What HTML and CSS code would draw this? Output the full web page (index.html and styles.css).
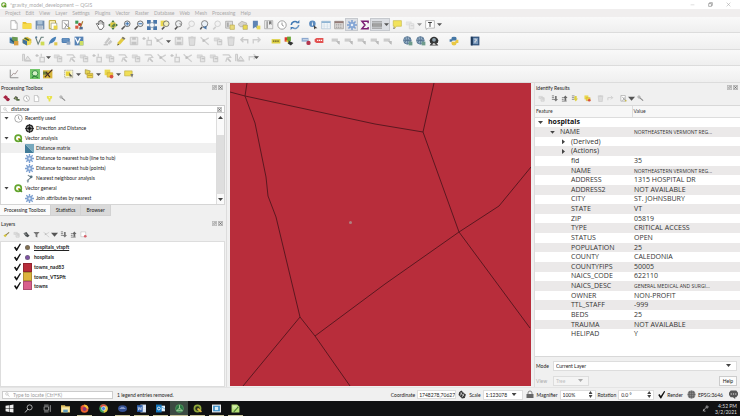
FILE: index.html
```html
<!DOCTYPE html>
<html lang="en">
<head>
<meta charset="utf-8">
<title>*gravity_model_development — QGIS</title>
<link rel="stylesheet" href="styles.css">
</head>
<body>
<svg class="defs" aria-hidden="true">
  <symbol id="q" viewBox="0 0 16 16"><circle cx="7.5" cy="7.5" r="5.5" fill="#fff" stroke="#63a52e" stroke-width="3"/><path d="M8 8l6 6" stroke="#4c8d24" stroke-width="3"/><path d="M7 7h4l-4 4z" fill="#d9a92b"/></symbol>
  <symbol id="page" viewBox="0 0 16 16"><path d="M3 1h7l3 4v10H3z" fill="#fff" stroke="#a9a9a9" stroke-width="1.3"/><path d="M10 1v4h3" fill="none" stroke="#a9a9a9"/></symbol>
  <symbol id="folder" viewBox="0 0 16 16"><path d="M1 3h5l2 2h7v9H1z" fill="#e8c12f"/><path d="M1 6h14v8H1z" fill="#f7db4b"/></symbol>
  <symbol id="save" viewBox="0 0 16 16"><path d="M1 1h14v14H1z" fill="#6e8bad"/><path d="M4 1h8v6H4z" fill="#a8c0d6"/><path d="M3 9h10v6H3z" fill="#d8dfe5"/><path d="M4 11h8M4 13h8" stroke="#7b8c9e"/></symbol>
  <symbol id="layout" viewBox="0 0 16 16"><path d="M2 1h10v13H2z" fill="#fff5c3" stroke="#b8a130" stroke-width="1.5"/><path d="M5 5h9v10H5z" fill="#fff" stroke="#8b8b6a"/><path d="M9 9h6v6H9z" fill="#ead545"/></symbol>
  <symbol id="layouts" viewBox="0 0 16 16"><path d="M2 1h10v13H2z" fill="#fff" stroke="#999" stroke-width="1.4"/><path d="M5 4l8 9M10 6l-4 7" stroke="#888" stroke-width="1.6"/><circle cx="13" cy="13" r="2" fill="#c5b74e"/></symbol>
  <symbol id="style" viewBox="0 0 16 16"><path d="M2 1h5v5H2z" fill="#3f9a56"/><path d="M2 9h5v5H2z" fill="#d8573c"/><path d="M9 15l5-13" stroke="#a9782e" stroke-width="2"/><circle cx="9" cy="7" r="2.5" fill="#c33d35"/><path d="M9 11h5v4H9z" fill="#4c6892"/></symbol>
  <symbol id="hand" viewBox="0 0 16 16"><path d="M4 9L2 6l2-1 2 3V2h2v-1h2v1h2v2h2v7l-3 4H7z" fill="#fff" stroke="#444" stroke-width="1.2"/><path d="M8 2v5M10 2v5M12 4v4" stroke="#777"/></symbol>
  <symbol id="pan" viewBox="0 0 16 16"><path d="M8 0l3 4H5zM8 16l3-4H5zM0 8l4-3v6zM16 8l-4-3v6z" fill="#44763d"/><path d="M4 4h8v8H4z" fill="#e2cc3c"/><path d="M5 10l5-5 2 3-3 4z" fill="#61864b"/></symbol>
  <symbol id="zin" viewBox="0 0 16 16"><path d="M1 15l5-5" stroke="#555" stroke-width="2.4"/><circle cx="10" cy="6" r="4.5" fill="#e2edf8" stroke="#555" stroke-width="1.3"/><path d="M7 6h6M10 3v6" stroke="#3e72ad" stroke-width="1.6"/></symbol>
  <symbol id="zout" viewBox="0 0 16 16"><path d="M1 15l5-5" stroke="#555" stroke-width="2.4"/><circle cx="10" cy="6" r="4.5" fill="#e8eff5" stroke="#555" stroke-width="1.3"/><path d="M7 6h6" stroke="#3e72ad" stroke-width="1.6"/></symbol>
  <symbol id="zfull" viewBox="0 0 16 16"><path d="M0 0h6v6H0zM10 0h6v6h-6zM0 10h6v6H0zM10 10h6v6h-6z" fill="#4a77ab"/><circle cx="8" cy="8" r="4" fill="#f6f9fc" stroke="#607a96"/></symbol>
  <symbol id="zsel" viewBox="0 0 16 16"><path d="M1 1h9v9H1z" fill="#ecd94d"/><path d="M3 15l4-4" stroke="#555" stroke-width="2.4"/><circle cx="10" cy="6" r="4.5" fill="#f1efc0" stroke="#666" stroke-width="1.3"/></symbol>
  <symbol id="zlay" viewBox="0 0 16 16"><path d="M3 15l4-4" stroke="#555" stroke-width="2.4"/><circle cx="9" cy="6" r="5" fill="#eef0f1" stroke="#777" stroke-width="1.4"/><path d="M9 5h4v4z" fill="#aaa"/></symbol>
  <symbol id="zoff" viewBox="0 0 16 16"><path d="M2 15l4-4" stroke="#ccc" stroke-width="2.4"/><circle cx="9" cy="6" r="4.5" fill="#f2f2f2" stroke="#ccc" stroke-width="1.4"/></symbol>
  <symbol id="zlast" viewBox="0 0 16 16"><path d="M2 15l3-4" stroke="#555" stroke-width="2.4"/><circle cx="9" cy="6" r="5" fill="#eaf1f8" stroke="#777" stroke-width="1.4"/><path d="M12 9v6l-6-3z" fill="#4c77a8"/></symbol>
  <symbol id="newmap" viewBox="0 0 16 16"><path d="M1 2h11v11H1z" fill="#ddd" stroke="#999"/><path d="M3 4h3v7H3z" fill="#aaa"/><path d="M8 8h7v7H8z" fill="#e9da7d" stroke="#b9a94a"/></symbol>
  <symbol id="new3d" viewBox="0 0 16 16"><path d="M0 7l6-5 8 3-2 5-8 1z" fill="#d6d3ce" stroke="#a5a19b"/><path d="M8 8h7v7H8z" fill="#ead84e" stroke="#aaa06a"/></symbol>
  <symbol id="bookm" viewBox="0 0 16 16"><path d="M3 1h8v13l-4-3-4 3z" fill="#5e84b4"/><path d="M9 9h6v6H9z" fill="#e7d656"/></symbol>
  <symbol id="books" viewBox="0 0 16 16"><path d="M1 1h13v13H1z" fill="#eee" stroke="#999"/><path d="M4 2h2v11H4z" fill="#888"/><path d="M8 2h4v6L10 6 8 8z" fill="#777"/></symbol>
  <symbol id="clock" viewBox="0 0 16 16"><circle cx="8" cy="8" r="6.7" fill="#fff" stroke="#8d8d8d" stroke-width="1.3"/><path d="M8 4v4l3 2" fill="none" stroke="#777" stroke-width="1.2"/></symbol>
  <symbol id="refresh" viewBox="0 0 16 16"><path d="M2 8a6 6 0 0 1 10-4" fill="none" stroke="#4179b4" stroke-width="2.5"/><path d="M14 8a6 6 0 0 1-10 4" fill="none" stroke="#6b97c5" stroke-width="2.5"/><path d="M10 5h5V0zM6 11H1v5z" fill="#4179b4"/></symbol>
  <symbol id="ident" viewBox="0 0 16 16"><circle cx="7" cy="6" r="5.2" fill="#5b8bbf"/><path d="M7 5v4M7 3v1" stroke="#fff" stroke-width="1.6"/><path d="M9 8l6 5-3 0-2 2z" fill="#444"/></symbol>
  <symbol id="table" viewBox="0 0 16 16"><path d="M1 2h14v12H1z" fill="#fff" stroke="#9fb9cf"/><path d="M1 2h14v3H1z" fill="#8fb4d3"/><path d="M5 5v9M10 5v9M1 8h14M1 11h14" stroke="#c5d6e2"/></symbol>
  <symbol id="calc" viewBox="0 0 16 16"><path d="M1 2h14v12H1z" fill="#dfdcda" stroke="#8f8b89"/><path d="M1 2h14v3H1z" fill="#957b77"/><path d="M3 7h10M3 9.5h10M3 12h10" stroke="#8b8b8b" stroke-dasharray="2 1"/></symbol>
  <symbol id="gear" viewBox="0 0 16 16"><path d="M8 0v16M0 8h16M2.3 2.3l11.4 11.4M13.7 2.3L2.3 13.7" stroke="#7c9fd0" stroke-width="2.4"/><circle cx="8" cy="8" r="5" fill="#86a7d5"/><circle cx="8" cy="8" r="2" fill="#e7eef8"/></symbol>
  <symbol id="sum" viewBox="0 0 16 16"><path d="M13 5V2H3l5 6-5 6h10v-3" fill="none" stroke="#7b1d73" stroke-width="2.3"/></symbol>
  <symbol id="ruler" viewBox="0 0 16 16"><path d="M0 3h16M0 13h16" stroke="#888" stroke-width="1.5"/><path d="M0 6h16v4H0z" fill="#aaa" stroke="#777"/></symbol>
  <symbol id="tip" viewBox="0 0 16 16"><path d="M2 1h13v9H7l-3 4v-4H2z" fill="#f2e35c" stroke="#c3b544"/><circle cx="3" cy="13" r="1.5" fill="#999"/></symbol>
  <symbol id="textann" viewBox="0 0 16 16"><path d="M1 1h14v12H5l-3 2V13H1z" fill="#fff" stroke="#999"/><path d="M5 4h6M8 4v7" stroke="#333" stroke-width="1.5"/></symbol>
  <symbol id="car" viewBox="0 0 8 8"><path d="M0 2h8L4 6.5z" fill="#555"/></symbol>
  <symbol id="layers" viewBox="0 0 16 16"><path d="M1 2l8 1v10l-8-2z" fill="#4e83ad"/><path d="M5 1l9 1v9l-9-1z" fill="#6b9a52"/><path d="M8 8h7v7H8z" fill="#d89f3f"/><path d="M2 5l6 5" stroke="#245177" stroke-width="2"/></symbol>
  <symbol id="gpkg" viewBox="0 0 16 16"><path d="M1 5l7-4 7 4v6l-7 4-7-4z" fill="#d9ba3c"/><path d="M1 5l7 3v7l-7-4z" fill="#41719d"/><path d="M8 8h6v6H8z" fill="#f0dc55"/><path d="M4 3l7 4" stroke="#3f6336" stroke-width="2.5"/></symbol>
  <symbol id="vee" viewBox="0 0 16 16"><path d="M1 2l4 11 5-11h4" fill="none" stroke="#667d79" stroke-width="1.7"/><circle cx="2" cy="2" r="1.7" fill="#5b7d99"/><path d="M9 9h6v6H9z" fill="#cedb55"/></symbol>
  <symbol id="feather" viewBox="0 0 16 16"><path d="M1 15c1-8 5-13 12-14 0 5-4 10-10 11z" fill="#4b82b8"/><path d="M10 10h5v5h-5z" fill="#e2c84c"/></symbol>
  <symbol id="chip" viewBox="0 0 16 16"><rect x="1" y="3" width="13" height="8" rx="2" fill="#4f7fb4"/><path d="M3 5h9M3 8h9" stroke="#92b3d5"/><path d="M9 9h6v5H9z" fill="#8ea4bf"/></symbol>
  <symbol id="virt" viewBox="0 0 16 16"><path d="M1 1h14v14H1z" fill="#5682b5"/><path d="M2 3l4 8 4-8" fill="none" stroke="#fff" stroke-width="2"/><path d="M9 8h6v7H9z" fill="#cddf66"/></symbol>
  <symbol id="pens" viewBox="0 0 16 16"><path d="M2 11l7-9 3 2-7 9zM7 12l5-6 3 3-5 5z" fill="#c8c8c8"/><path d="M1 14h7" stroke="#bbb" stroke-width="2"/></symbol>
  <symbol id="pencil" viewBox="0 0 16 16"><path d="M2 15l1-5 8-9 4 3-8 9z" fill="#e3cb42"/><path d="M11 1l4 3-2 2-4-3z" fill="#777"/><path d="M2 15l1-3 2 2z" fill="#444"/></symbol>
  <symbol id="d1" viewBox="0 0 16 16"><path d="M2 2h12v12H2z" fill="#e8e8e8" stroke="#c8c8c8" stroke-width="1.5"/><path d="M5 2h6v4H5zM4 9h8v5H4z" fill="#c5c5c5"/></symbol>
  <symbol id="d2" viewBox="0 0 16 16"><path d="M1 4h5M8 7h7v7H8z" fill="#eee" stroke="#cdcdcd" stroke-width="2"/><circle cx="3" cy="4" r="2" fill="#c4c4c4"/><path d="M10 1v5" stroke="#ccc" stroke-width="2"/></symbol>
  <symbol id="d3" viewBox="0 0 16 16"><path d="M1 2l5 5 8 7M14 3L4 9" fill="none" stroke="#cfcfcf" stroke-width="2"/><circle cx="6" cy="7" r="2" fill="#bdbdbd"/></symbol>
  <symbol id="d4" viewBox="0 0 16 16"><path d="M3 3h10l-1 12H4zM2 2h12M6 0h4" fill="#ddd" stroke="#cacaca" stroke-width="1.5"/></symbol>
  <symbol id="d5" viewBox="0 0 16 16"><path d="M2 3h8v5H2z" fill="#ddd" stroke="#cdcdcd"/><path d="M7 6h7v8H7z" fill="#e6e6e6" stroke="#c8c8c8" stroke-width="1.5"/><path d="M9 9h5" stroke="#c4c4c4" stroke-width="2"/></symbol>
  <symbol id="d6" viewBox="0 0 16 16"><path d="M14 12V6H3M7 2L3 6l4 4" fill="none" stroke="#cacaca" stroke-width="2.2"/></symbol>
  <symbol id="d7" viewBox="0 0 16 16"><path d="M2 12V6h11M9 2l4 4-4 4" fill="none" stroke="#cfcfcf" stroke-width="2.2"/></symbol>
  <symbol id="d8" viewBox="0 0 16 16"><path d="M1 13V2h3v11h11M5 12l4-7 5 7z" fill="#e4e4e4" stroke="#c8c8c8" stroke-width="1.6"/></symbol>
  <symbol id="d9" viewBox="0 0 16 16"><path d="M1 3h10l3 4-6 1-2 6" fill="none" stroke="#cdcdcd" stroke-width="2"/><path d="M9 9l5 5" stroke="#c4c4c4" stroke-width="2.5"/></symbol>
  <symbol id="tag" viewBox="0 0 16 16"><path d="M1 5h14v7H1z" fill="#ddd044"/><path d="M3 8h10" stroke="#655f25" stroke-width="2" stroke-dasharray="2.5 1"/></symbol>
  <symbol id="pie" viewBox="0 0 16 16"><path d="M1 2h6v7H1z" fill="#df3a2b"/><path d="M5 1h6v7H5z" fill="#68a433"/><path d="M7 7l8 4-4 4-5-3z" fill="#333"/><path d="M2 7h5v4z" fill="#e2cf34"/></symbol>
  <symbol id="pin" viewBox="0 0 16 16"><path d="M1 3h11v6H1z" fill="#8ca8cf"/><path d="M3 6h8" stroke="#fff"/><circle cx="12" cy="11" r="3.5" fill="#b2364e"/></symbol>
  <symbol id="rtag" viewBox="0 0 16 16"><path d="M1 5l3-2h11v8H4L1 9z" fill="#e25251"/><path d="M5 7h8" stroke="#fff" stroke-width="2" stroke-dasharray="2 1"/></symbol>
  <symbol id="dtag" viewBox="0 0 16 16"><path d="M1 4h10v5H1z" fill="#ccc"/><path d="M8 8h6v6l-3-2z" fill="#bbb"/></symbol>
  <symbol id="globe" viewBox="0 0 16 16"><circle cx="7" cy="7" r="6" fill="#9ab4cb" stroke="#547390" stroke-width="1.3"/><path d="M1 7h12M7 1v12M3 3q4 3 0 8M11 3q-4 3 0 8" fill="none" stroke="#41617f"/><path d="M9 9h6v6H9z" fill="#6f9b8b"/></symbol>
  <symbol id="osm" viewBox="0 0 16 16"><path d="M1 7q2-6 7-6t7 6l-1 4H2z" fill="#333"/><circle cx="8" cy="6" r="3" fill="#8fa2ad"/><path d="M1 15l3-5 3 2 2-2 3 1 3 4z" fill="#444"/><path d="M5 14l3-3 3 3z" fill="#eee"/></symbol>
  <symbol id="py" viewBox="0 0 16 16"><path d="M4 9V3q0-2 4-2t4 2v4H6q-2 0-2 2H1V5h7" fill="#4678a6"/><path d="M12 6v6q0 3-4 3t-4-3V9h6q2 0 2-3h3v5H8" fill="#e9c844"/></symbol>
  <symbol id="help" viewBox="0 0 16 16"><path d="M1 1h14v14H1z" fill="#33557e"/><path d="M5 3h8v10H5z" fill="#7998bb"/><path d="M3 1v14" stroke="#182f4c" stroke-width="2"/><path d="M7 5h3v3H8v3" fill="none" stroke="#eee" stroke-width="1.3"/></symbol>
  <symbol id="plot" viewBox="0 0 16 16"><path d="M2 1v13h13" fill="none" stroke="#777" stroke-width="1.3"/><path d="M3 12l4-5 3 1 4-6" fill="none" stroke="#988" stroke-width="1.3"/></symbol>
  <symbol id="ors" viewBox="0 0 16 16"><path d="M0 0h16v16H0z" fill="#72c669"/><circle cx="8" cy="7" r="4.5" fill="#d4efc6" stroke="#338a43" stroke-width="1.5"/><path d="M3 14l4-3 6 3" stroke="#31843b" stroke-width="2" fill="none"/></symbol>
  <symbol id="broom" viewBox="0 0 16 16"><path d="M0 2h15v13H0z" fill="#d8b63d"/><path d="M0 4h7v5H0z" fill="#6b7f38"/><path d="M3 13L15 1M5 5l6 8" stroke="#4b2f22" stroke-width="2"/></symbol>
  <symbol id="sel" viewBox="0 0 16 16"><path d="M1 2h13v12H1z" fill="#fbf7ca" stroke="#888" stroke-dasharray="2 1"/><path d="M3 4h7v7H3z" fill="#e9d53c"/><path d="M8 6l6 6H9z" fill="#555"/></symbol>
  <symbol id="selv" viewBox="0 0 16 16"><path d="M2 1l8 2-2 6-6-1z" fill="#e5d454" stroke="#9b8c31"/><path d="M5 7h9v7H5z" fill="#f3db4a" stroke="#a98d2c"/><path d="M6 10h7" stroke="#886d29"/></symbol>
  <symbol id="desel" viewBox="0 0 16 16"><path d="M1 1h9v9H1z" fill="#ead84d"/><path d="M5 6h9v7H5z" fill="#eecf40" stroke="#c5a831"/><circle cx="12" cy="12" r="3" fill="#d95042"/></symbol>
  <symbol id="selloc" viewBox="0 0 16 16"><path d="M1 3h12v8H1z" fill="#f0df57" stroke="#bcad42"/><path d="M10 8h5l-2 6z" fill="#777"/></symbol>
  <symbol id="gears" viewBox="0 0 16 16"><circle cx="6" cy="5" r="4" fill="#ba2e4b"/><circle cx="11" cy="10" r="4" fill="#9e2140"/><path d="M1 5h10M6 1v9M7 10h8" stroke="#9e2140" stroke-width="2"/></symbol>
  <symbol id="model" viewBox="0 0 16 16"><path d="M1 8l5-6 5 3v5H4z" fill="#555c50"/><path d="M6 9h9v4H8z" fill="#516844"/><path d="M4 6l4 3" stroke="#bad46a" stroke-width="2"/></symbol>
  <symbol id="wrench" viewBox="0 0 16 16"><path d="M6 6l8 7" stroke="#888" stroke-width="2.5"/><circle cx="4.5" cy="4.5" r="2.5" fill="none" stroke="#999" stroke-width="2"/></symbol>
  <symbol id="bulb" viewBox="0 0 16 16"><path d="M2 2h12v5l-4 4v4H6v-4L2 7z" fill="#e8e24e"/><path d="M5 4h4v4z" fill="#fffbb5"/></symbol>
  <symbol id="mag" viewBox="0 0 16 16"><circle cx="6" cy="6" r="4" fill="none" stroke="#999" stroke-width="1.4"/><path d="M9 9l5 6" stroke="#999" stroke-width="1.6"/></symbol>
  <symbol id="compass" viewBox="0 0 16 16"><circle cx="8" cy="8" r="6" fill="#888" stroke="#222" stroke-width="2"/><path d="M8 0v16M0 8h16" stroke="#222" stroke-width="1.5"/><circle cx="8" cy="8" r="2.5" fill="#111"/></symbol>
  <symbol id="matrix" viewBox="0 0 16 16"><path d="M0 0h16v16H0z" fill="#77a9bd"/><path d="M0 0l16 16H0z" fill="#427c99"/><path d="M0 0l16 16" stroke="#a7c8d5"/></symbol>
  <symbol id="near" viewBox="0 0 16 16"><path d="M5 2l6 4-6 5v4" fill="none" stroke="#73838b" stroke-width="2"/><circle cx="11" cy="5" r="2.5" fill="#54717f"/><circle cx="5" cy="12" r="2" fill="#8ca0aa"/></symbol>
  <symbol id="brush" viewBox="0 0 16 16"><path d="M1 10l5-3 3 3-4 4z" fill="#d5c43e"/><path d="M7 9l7-6" stroke="#8c8050" stroke-width="2.5"/></symbol>
  <symbol id="eye" viewBox="0 0 16 16"><path d="M1 5l7-3 4 6 3 2-4 4-5-2z" fill="#4c5052"/><path d="M3 6l5 2" stroke="#c2c8c2" stroke-width="1.5"/></symbol>
  <symbol id="filter" viewBox="0 0 16 16"><path d="M1 2h14l-5 6v7l-4-2V8z" fill="#777"/></symbol>
  <symbol id="expand" viewBox="0 0 16 16"><path d="M2 2h5M2 6h5M2 10h5" stroke="#666" stroke-width="1.7"/><path d="M9 2h4v7h3l-5 6-5-6h3z" fill="#777"/></symbol>
  <symbol id="collapse" viewBox="0 0 16 16"><path d="M2 6h4M2 10h4M2 14h11" stroke="#666" stroke-width="1.7"/><path d="M8 13h4V7h3l-5-6-5 6h3z" fill="#666"/></symbol>
  <symbol id="expnew" viewBox="0 0 16 16"><path d="M2 2h6M2 6h6M2 10h6" stroke="#777" stroke-width="1.7"/><path d="M8 2h5v6h3l-5 7-5-7h2z" fill="#ddcf42"/></symbol>
  <symbol id="remove" viewBox="0 0 16 16"><path d="M2 2h11v11H2z" fill="#fff" stroke="#aaa"/><circle cx="12" cy="12" r="3" fill="#d7606a"/></symbol>
  <symbol id="dock" viewBox="0 0 16 16"><path d="M1 1h14v14H1zM5 6h5v5H5zM7 4h5v5" fill="none" stroke="#808080" stroke-width="1.6"/></symbol>
  <symbol id="close" viewBox="0 0 16 16"><path d="M1 1h14v14H1z" fill="#ddd" stroke="#808080" stroke-width="1.5"/><path d="M4 4l8 8M12 4l-8 8" stroke="#555" stroke-width="2"/></symbol>
  <symbol id="extent" viewBox="0 0 16 16"><path d="M2 4l4-3 4 4 4 3-2 6-5 1-6-6z" fill="#333"/><path d="M4 5l7 6M7 4l-3 6M11 6l-4 7" stroke="#ddd" stroke-width="1.3"/></symbol>
  <symbol id="lock" viewBox="0 0 16 16"><path d="M4 8V5q0-4 4-4t4 4v3" fill="none" stroke="#888" stroke-width="2"/><path d="M1 7h14v8H1z" fill="#666"/></symbol>
  <symbol id="crs" viewBox="0 0 16 16"><circle cx="8" cy="8" r="7" fill="#888"/><path d="M1 8h14M8 1v14M3 4h10M3 12h10M5 2q-3 6 0 12M11 2q3 6 0 12" fill="none" stroke="#555"/></symbol>
  <symbol id="msg" viewBox="0 0 16 16"><path d="M3 1h10l3 4v4l-3 4h-2v3l-4-3H3L0 9V5z" fill="#555"/><path d="M3 7h10" stroke="#eee" stroke-width="2" stroke-dasharray="2 2"/></symbol>
  <symbol id="win" viewBox="0 0 16 16"><path d="M1 3l6-1v5.500H1zM8 2l7-1v6.500H8zM1 8.500h6V14l-6-1zM8 8.500h7V15l-7-1z" fill="#eee"/></symbol>
  <symbol id="wmag" viewBox="0 0 16 16"><circle cx="10" cy="6" r="4.5" fill="none" stroke="#ddd" stroke-width="1.3"/><path d="M7 9l-5 6" stroke="#ddd" stroke-width="1.5"/></symbol>
  <symbol id="task" viewBox="0 0 16 16"><path d="M2 5h8v6H2zM2 2h8M2 14h8M13 2v12" fill="none" stroke="#bbb" stroke-width="1.3"/></symbol>
  <symbol id="files" viewBox="0 0 16 16"><path d="M0 2h7l1 2h8v11H0z" fill="#e4c365"/><path d="M1 6h14v8H1z" fill="#f8e9aa"/><path d="M4 10h8v5H4z" fill="#5e9cbd"/></symbol>
  <symbol id="ff" viewBox="0 0 16 16"><circle cx="8" cy="8.500" r="7" fill="#ec6430"/><path d="M7 1q8 1 8 8L9 6z" fill="#f5c538"/><circle cx="8" cy="9" r="3.500" fill="#8b3979"/><path d="M1 4l5 3-3 4z" fill="#e43c3d"/></symbol>
  <symbol id="chrome" viewBox="0 0 16 16"><circle cx="8" cy="8" r="7.500" fill="#3da35a"/><path d="M1.500 4a7.500 7.500 0 0 1 13 0L8 8z" fill="#df4a3f"/><path d="M14.500 4a7.500 7.500 0 0 1-6 11.500L8 8V4z" fill="#eac53f"/><circle cx="8" cy="8" r="3.500" fill="#4a83db" stroke="#fff"/></symbol>
  <symbol id="oval" viewBox="0 0 16 16"><ellipse cx="8" cy="8" rx="8" ry="6" fill="#334f91"/><path d="M3 8h10M5 6h6" stroke="#a7b7df" stroke-width="1.3"/></symbol>
  <symbol id="word" viewBox="0 0 16 16"><path d="M6 1h10v14H6z" fill="#d4e0f1"/><path d="M0 2h10v12H0z" fill="#2b5da9"/><path d="M2 5l1 6 2-5 2 5 1-6M11 5h4M11 8h4M11 11h4" fill="none" stroke="#fff"/></symbol>
  <symbol id="outlook" viewBox="0 0 16 16"><path d="M7 3h9v10H7z" fill="#e2eef7"/><path d="M0 1h10v14H0z" fill="#1677bd"/><circle cx="5" cy="8" r="2.5" fill="none" stroke="#fff" stroke-width="1.5"/><path d="M10 5l6 4" stroke="#1677bd"/></symbol>
  <symbol id="green" viewBox="0 0 16 16"><circle cx="8" cy="8" r="7" fill="#2a7543" stroke="#62ab6b"/><path d="M8 2v6M3 12l5-5 5 5z" stroke="#b0d7a6" stroke-width="1.5" fill="#478f50"/></symbol>
  <symbol id="qt" viewBox="0 0 16 16"><circle cx="8" cy="8" r="5.5" fill="#26301a" stroke="#8fa83b" stroke-width="3"/><path d="M8 8l7 6" stroke="#d9b63c" stroke-width="3"/></symbol>
  <symbol id="photo" viewBox="0 0 16 16"><path d="M0 1h16v14H0z" fill="#eee"/><path d="M2 3h12v10H2z" fill="#3c8fc8"/><path d="M5 5h6v6H5z" fill="#d9ecf5"/></symbol>
  <symbol id="npp" viewBox="0 0 16 16"><path d="M1 1h10l4 4v10H1z" fill="#b5df77"/><path d="M3 4h7M3 7h8" stroke="#fff"/><path d="M5 14l8-9" stroke="#4a7d34" stroke-width="2"/></symbol>
  <symbol id="usb" viewBox="0 0 16 16"><path d="M2 14l7-8M9 6l1-4 4 1-1 4zM4 9v5h4" fill="none" stroke="#ccc" stroke-width="1.5"/></symbol>
  <symbol id="min" viewBox="0 0 16 16"><path d="M2 9h12" stroke="#bbb" stroke-width="1.5"/></symbol>
  <symbol id="rest" viewBox="0 0 16 16"><path d="M2 5h9v9H2zM5 5V2h9v9h-3" fill="none" stroke="#888" stroke-width="2"/></symbol>
  <symbol id="x" viewBox="0 0 16 16"><path d="M2 2l12 12M14 2L2 14" stroke="#999" stroke-width="1.5"/></symbol>
</svg>

<header class="title"><svg class="i9"><use href="#q"/></svg><span class="name">*gravity_model_development — QGIS</span>
  <button aria-label="Minimize"><svg><use href="#min"/></svg></button><button aria-label="Restore"><svg><use href="#rest"/></svg></button><button aria-label="Close"><svg><use href="#x"/></svg></button>
</header>
<nav class="menu"><a href="#">Project</a><a href="#">Edit</a><a href="#">View</a><a href="#">Layer</a><a href="#">Settings</a><a href="#">Plugins</a><a href="#">Vector</a><a href="#">Raster</a><a href="#">Database</a><a href="#">Web</a><a href="#">Mesh</a><a href="#">Processing</a><a href="#">Help</a></nav>

<div class="bar short">
  <div class="g n6"><button aria-label="New"><svg><use href="#page"/></svg></button><button aria-label="Open"><svg><use href="#folder"/></svg></button><button aria-label="Save"><svg><use href="#save"/></svg></button><button aria-label="New layout"><svg><use href="#layout"/></svg></button><button aria-label="Layout manager"><svg><use href="#layouts"/></svg></button><button aria-label="Style manager"><svg><use href="#style"/></svg></button></div>
  <div class="g n16"><button aria-label="Pan"><svg><use href="#hand"/></svg></button><button aria-label="Pan to selection"><svg><use href="#pan"/></svg></button><button aria-label="Zoom in"><svg><use href="#zin"/></svg></button><button aria-label="Zoom out"><svg><use href="#zout"/></svg></button><button aria-label="Zoom full"><svg><use href="#zfull"/></svg></button><button aria-label="Zoom to selection"><svg><use href="#zsel"/></svg></button><button aria-label="Zoom to layer"><svg><use href="#zlay"/></svg></button><button aria-label="Native resolution"><svg><use href="#zoff"/></svg></button><button aria-label="Zoom last"><svg><use href="#zlast"/></svg></button><button aria-label="Zoom next"><svg><use href="#zoff"/></svg></button><button aria-label="New map view"><svg><use href="#newmap"/></svg></button><button aria-label="New 3D view"><svg><use href="#new3d"/></svg></button><button aria-label="New bookmark"><svg><use href="#bookm"/></svg></button><button aria-label="Show bookmarks"><svg><use href="#books"/></svg></button><button aria-label="Temporal controller"><svg><use href="#clock"/></svg></button><button aria-label="Refresh"><svg><use href="#refresh"/></svg></button></div>
  <div class="g n5"><button aria-label="Identify"><svg><use href="#ident"/></svg></button><button aria-label="Attribute table"><svg><use href="#table"/></svg></button><button aria-label="Field calculator"><svg><use href="#calc"/></svg></button><button class="on" aria-label="Toolbox"><svg><use href="#gear"/></svg></button><button aria-label="Statistics"><svg><use href="#sum"/></svg></button></div>
  <button class="drop on" aria-label="Measure"><svg><use href="#ruler"/></svg><svg class="car"><use href="#car"/></svg></button>
  <button aria-label="Map tips"><svg><use href="#tip"/></svg></button>
  <button class="drop off" aria-label="Actions"><svg><use href="#d5"/></svg><svg class="car"><use href="#car"/></svg></button>
  <button class="drop" aria-label="Text annotation"><svg><use href="#textann"/></svg><svg class="car"><use href="#car"/></svg></button>
</div>

<div class="bar">
  <div class="g n6"><button aria-label="Data source manager"><svg><use href="#layers"/></svg></button><button aria-label="New GeoPackage"><svg><use href="#gpkg"/></svg></button><button aria-label="New shapefile"><svg><use href="#vee"/></svg></button><button aria-label="New SpatiaLite"><svg><use href="#feather"/></svg></button><button aria-label="Scratch layer"><svg><use href="#chip"/></svg></button><button aria-label="Virtual layer"><svg><use href="#virt"/></svg></button></div>
  <div class="g n4 far"><button aria-label="Current edits"><svg><use href="#pens"/></svg></button><button aria-label="Toggle editing"><svg><use href="#pencil"/></svg></button><button aria-label="Save edits"><svg><use href="#d1"/></svg></button><button aria-label="Add feature"><svg><use href="#d2"/></svg></button></div>
  <button class="drop" aria-label="Vertex tool"><svg><use href="#d3"/></svg><svg class="car"><use href="#car"/></svg></button>
  <div class="g n7"><button aria-label="Modify attributes"><svg><use href="#d1"/></svg></button><button aria-label="Delete"><svg><use href="#d4"/></svg></button><button aria-label="Cut"><svg><use href="#d3"/></svg></button><button aria-label="Copy"><svg><use href="#d5"/></svg></button><button aria-label="Paste"><svg><use href="#d4"/></svg></button><button aria-label="Undo"><svg><use href="#d6"/></svg></button><button aria-label="Redo"><svg><use href="#d7"/></svg></button></div>
  <div class="g n2 mid"><button aria-label="Labels"><svg><use href="#tag"/></svg></button><button aria-label="Diagrams"><svg><use href="#pie"/></svg></button></div>
  <div class="g n2 near"><button aria-label="Pinned labels"><svg><use href="#pin"/></svg></button><button aria-label="Unplaced labels"><svg><use href="#rtag"/></svg></button></div>
  <div class="g n5 near"><button aria-label="Pin label"><svg><use href="#dtag"/></svg></button><button aria-label="Show label"><svg><use href="#dtag"/></svg></button><button aria-label="Move label"><svg><use href="#dtag"/></svg></button><button aria-label="Rotate label"><svg><use href="#dtag"/></svg></button><button aria-label="Change label"><svg><use href="#dtag"/></svg></button></div>
  <div class="g n3 mid"><button aria-label="Search catalog"><svg><use href="#globe"/></svg></button><button aria-label="Geocode"><svg><use href="#globe"/></svg></button><button aria-label="Street map"><svg><use href="#osm"/></svg></button></div>
  <button class="mid" aria-label="Python console"><svg><use href="#py"/></svg></button>
  <button class="mid" aria-label="Help contents"><svg><use href="#help"/></svg></button>
</div>

<div class="bar short">
  <div class="g n2 indent"><button aria-label="Advanced digitizing"><svg><use href="#d8"/></svg></button><button aria-label="Move feature"><svg><use href="#d2"/></svg></button></div><svg class="car"><use href="#car"/></svg>
  <div class="g n16"><button aria-label="Rotate"><svg><use href="#d5"/></svg></button><button aria-label="Simplify"><svg><use href="#d9"/></svg></button><button aria-label="Add ring"><svg><use href="#d5"/></svg></button><button aria-label="Add part"><svg><use href="#d2"/></svg></button><button aria-label="Fill ring"><svg><use href="#d5"/></svg></button><button aria-label="Delete ring"><svg><use href="#d9"/></svg></button><button aria-label="Delete part"><svg><use href="#d5"/></svg></button><button aria-label="Reshape"><svg><use href="#d9"/></svg></button><button aria-label="Offset curve"><svg><use href="#d3"/></svg></button><button aria-label="Reverse line"><svg><use href="#d2"/></svg></button><button aria-label="Trim"><svg><use href="#d3"/></svg></button><button aria-label="Split features"><svg><use href="#d5"/></svg></button><button aria-label="Split parts"><svg><use href="#d5"/></svg></button><button aria-label="Merge"><svg><use href="#d9"/></svg></button><button aria-label="Merge attributes"><svg><use href="#d8"/></svg></button><button aria-label="Rotate symbols"><svg><use href="#d7"/></svg></button></div><svg class="car"><use href="#car"/></svg>
</div>

<div class="bar">
  <button class="first" aria-label="Plot"><svg><use href="#plot"/></svg></button>
  <div class="g n2 mid"><button aria-label="Route tools"><svg><use href="#ors"/></svg></button><button aria-label="Clean"><svg><use href="#broom"/></svg></button></div>
  <button class="drop mid" aria-label="Select features"><svg><use href="#sel"/></svg><svg class="car"><use href="#car"/></svg></button>
  <button class="drop" aria-label="Select by value"><svg><use href="#selv"/></svg><svg class="car"><use href="#car"/></svg></button>
  <button class="drop" aria-label="Deselect"><svg><use href="#desel"/></svg><svg class="car"><use href="#car"/></svg></button>
  <button aria-label="Select by location"><svg><use href="#selloc"/></svg></button>
</div>

<main>
  <div class="left">
    <section class="toolbox">
      <div class="dock"><h2>Processing Toolbox</h2><button aria-label="Float"><svg><use href="#dock"/></svg></button><button aria-label="Close panel"><svg><use href="#close"/></svg></button></div>
      <div class="tools"><button aria-label="Run"><svg><use href="#gears"/></svg></button><button aria-label="Models"><svg><use href="#model"/></svg></button><button aria-label="History"><svg><use href="#clock"/></svg></button><button aria-label="Results"><svg><use href="#page"/></svg></button><button class="sp" aria-label="Edit in place"><svg><use href="#bulb"/></svg></button><button class="sp" aria-label="Options"><svg><use href="#wrench"/></svg></button></div>
      <label class="find"><svg><use href="#mag"/></svg><input type="text" aria-label="Search algorithms" value="distance"><svg><use href="#close"/></svg></label>
      <div class="algos">
        <ul>
          <li class="top"><i class="tri"></i><svg><use href="#clock"/></svg>Recently used</li>
          <li><svg><use href="#compass"/></svg>Direction and Distance</li>
          <li class="top"><i class="tri"></i><svg><use href="#q"/></svg>Vector analysis</li>
          <li class="hit"><svg><use href="#matrix"/></svg>Distance matrix</li>
          <li><svg><use href="#gear"/></svg>Distance to nearest hub (line to hub)</li>
          <li><svg><use href="#gear"/></svg>Distance to nearest hub (points)</li>
          <li><svg><use href="#near"/></svg>Nearest neighbour analysis</li>
          <li class="top"><i class="tri"></i><svg><use href="#q"/></svg>Vector general</li>
          <li><svg><use href="#gear"/></svg>Join attributes by nearest</li>
        </ul>
        <div class="scroll"><i class="tri up"></i><span class="track"></span><i class="tri"></i></div>
      </div>
      <div class="tabs"><button class="cur">Processing Toolbox</button><button>Statistics</button><button>Browser</button></div>
    </section>
    <section class="layers">
      <div class="dock"><h2>Layers</h2><button aria-label="Float"><svg><use href="#dock"/></svg></button><button aria-label="Close panel"><svg><use href="#close"/></svg></button></div>
      <div class="tools"><button aria-label="Styling"><svg><use href="#brush"/></svg></button><button aria-label="Add group"><svg><use href="#d5"/></svg></button><button aria-label="Map themes"><svg><use href="#eye"/></svg></button><button aria-label="Filter legend"><svg><use href="#filter"/></svg></button><button aria-label="Filter expression"><svg><use href="#d3"/></svg></button><svg class="car"><use href="#car"/></svg><button aria-label="Expand all"><svg><use href="#expand"/></svg></button><button aria-label="Collapse all"><svg><use href="#collapse"/></svg></button><button aria-label="Remove layer"><svg><use href="#remove"/></svg></button></div>
      <div class="legend">
        <label><input type="checkbox" checked><i class="dot olive"></i><u>hospitals_vtspft</u></label>
        <label><input type="checkbox" checked><i class="dot purple"></i>hospitals</label>
        <label><input type="checkbox" checked><i class="sq red"></i>towns_nad83</label>
        <label><input type="checkbox" checked><i class="sq gold"></i>towns_VTSPft</label>
        <label><input type="checkbox" checked><i class="sq pink"></i>towns</label>
      </div>
    </section>
  </div>

  <div class="map">
    <svg viewBox="0 0 301 303" preserveAspectRatio="none" role="img" aria-label="Town boundaries">
      <path d="M0 9l15 4 130 28 48 8 36 100 71 96M17 0l-2 13 10 27 11 54 2 19 8 21 24 100 15 19 35 50M204 0l-11 49M301 84l-32 39-40 26-74 52-70 52M70 234l-57 69" fill="none" stroke="#5c1820" stroke-width="1"/>
      <circle cx="120.5" cy="139.5" r="1.5" fill="#b08080"/>
    </svg>
  </div>

  <section class="right">
    <div class="dock"><h2>Identify Results</h2><button aria-label="Float"><svg><use href="#dock"/></svg></button><button aria-label="Close panel"><svg><use href="#close"/></svg></button></div>
    <div class="tools"><button aria-label="Form view"><svg><use href="#d5"/></svg></button><button class="sp" aria-label="Expand tree"><svg><use href="#expand"/></svg></button><button aria-label="Collapse tree"><svg><use href="#collapse"/></svg></button><button aria-label="Expand new"><svg><use href="#expnew"/></svg></button><button class="sp" aria-label="Clear"><svg><use href="#desel"/></svg></button><button class="sp" aria-label="Copy feature"><svg><use href="#d4"/></svg></button><button aria-label="Print"><svg><use href="#d7"/></svg></button><button class="sp" aria-label="Identify mode"><svg><use href="#layouts"/></svg></button><svg class="car"><use href="#car"/></svg><button aria-label="Settings"><svg><use href="#wrench"/></svg></button></div>
    <div class="results">
      <table>
        <thead><tr><th>Feature</th><th>Value</th></tr></thead>
        <tbody>
          <tr><td class="l0"><i class="tri"></i>hospitals</td><td></td></tr>
          <tr><td class="l1"><i class="tri"></i>NAME</td><td class="tiny">NORTHEASTERN VERMONT REG...</td></tr>
          <tr><td class="l2"><i class="tri side"></i>(Derived)</td><td></td></tr>
          <tr><td class="l2"><i class="tri side"></i>(Actions)</td><td></td></tr>
          <tr><td>fid</td><td>35</td></tr>
          <tr><td>NAME</td><td class="tiny">NORTHEASTERN VERMONT REG...</td></tr>
          <tr><td>ADDRESS</td><td>1315 HOSPITAL DR</td></tr>
          <tr><td>ADDRESS2</td><td>NOT AVAILABLE</td></tr>
          <tr><td>CITY</td><td>ST. JOHNSBURY</td></tr>
          <tr><td>STATE</td><td>VT</td></tr>
          <tr><td>ZIP</td><td>05819</td></tr>
          <tr><td>TYPE</td><td>CRITICAL ACCESS</td></tr>
          <tr><td>STATUS</td><td>OPEN</td></tr>
          <tr><td>POPULATION</td><td>25</td></tr>
          <tr><td>COUNTY</td><td>CALEDONIA</td></tr>
          <tr><td>COUNTYFIPS</td><td>50005</td></tr>
          <tr><td>NAICS_CODE</td><td>622110</td></tr>
          <tr><td>NAICS_DESC</td><td class="tiny">GENERAL MEDICAL AND SURGI...</td></tr>
          <tr><td>OWNER</td><td>NON-PROFIT</td></tr>
          <tr><td>TTL_STAFF</td><td>-999</td></tr>
          <tr><td>BEDS</td><td>25</td></tr>
          <tr><td>TRAUMA</td><td>NOT AVAILABLE</td></tr>
          <tr><td>HELIPAD</td><td>Y</td></tr>
        </tbody>
      </table>
    </div>
    <div class="opt"><label for="mode">Mode</label><span class="pick wide"><select id="mode"><option>Current Layer</option></select><i class="tri"></i></span></div>
    <div class="opt"><label class="dim" for="view">View</label><span class="pick narrow dim"><select id="view" disabled><option>Tree</option></select><i class="tri"></i></span><button class="helpbtn">Help</button></div>
  </section>
</main>

<footer class="status">
  <label class="find locate"><svg><use href="#mag"/></svg><input type="text" aria-label="Locate" placeholder="Type to locate (Ctrl+K)"></label>
  <span class="note">1 legend entries removed.</span>
  <label for="coord">Coordinate</label><input class="coord" id="coord" type="text" value="1748278,706278">
  <svg><use href="#extent"/></svg>
  <label for="scale">Scale</label><span class="pick scale"><select id="scale"><option>1:123078</option></select><i class="tri"></i></span>
  <svg class="lock"><use href="#lock"/></svg>
  <label for="magn">Magnifier</label><span class="spin"><input id="magn" type="text" value="100%"><span class="ud"><i class="tri up"></i><i class="tri"></i></span></span>
  <label for="rot">Rotation</label><span class="spin"><input id="rot" type="text" value="0.0 °"><span class="ud"><i class="tri up"></i><i class="tri"></i></span></span>
  <label class="render"><input type="checkbox" checked>Render</label>
  <svg class="crs"><use href="#crs"/></svg><span>EPSG:3646</span>
  <svg class="last"><use href="#msg"/></svg>
</footer>
<div class="taskbar">
  <div class="apps"><button aria-label="Start"><svg><use href="#win"/></svg></button><button aria-label="Search"><svg><use href="#wmag"/></svg></button><button aria-label="Task view"><svg><use href="#task"/></svg></button><button aria-label="Files"><svg><use href="#files"/></svg></button><button class="run" aria-label="Firefox"><svg><use href="#ff"/></svg></button><button aria-label="Chrome"><svg><use href="#chrome"/></svg></button><button class="run" aria-label="Viewer"><svg><use href="#oval"/></svg></button><button class="run" aria-label="Word"><svg><use href="#word"/></svg></button><button class="run" aria-label="Outlook"><svg><use href="#outlook"/></svg></button><button class="run act" aria-label="Recorder"><svg><use href="#green"/></svg></button><button class="run" aria-label="QGIS"><svg><use href="#qt"/></svg></button><button class="run" aria-label="Photos"><svg><use href="#photo"/></svg></button><button class="run" aria-label="Notepad"><svg><use href="#npp"/></svg></button></div>
  <svg><use href="#usb"/></svg><div class="time">4:52 PM<br>3/2/2021</div>
</div>
</body>
</html>
```
FILE: styles.css
```css
* { box-sizing: border-box; margin: 0; padding: 0; }
html, body { height: 100%; }
body { display: flex; flex-direction: column; font: 5px/8px Lato, "Open Sans", sans-serif; color: #222; background: #f0f0f0; overflow: hidden; white-space: nowrap; }
button, input, select { font: inherit; color: inherit; border: 0; background: none; min-width: 0; }
button { display: flex; align-items: center; justify-content: center; }
svg { display: block; width: 10px; height: 10px; flex: none; }
ul { list-style: none; }
.defs { position: absolute; width: 0; height: 0; }
svg.car { width: 5px; height: 5px; }

.title { display: flex; align-items: center; height: 9px; background: #fff; color: #aaa; padding: 0 4px 0 1px; gap: 3px; }
.title .i9 { width: 6px; height: 6px; }
.title .name { flex: 1; }
.title button { width: 15px; }
.title button svg { width: 5px; height: 5px; }
.menu { display: flex; gap: 5px; height: 8px; padding-left: 5px; background: #f0eeee; }
.menu a { color: #aaa; text-decoration: none; }

.bar { display: flex; align-items: center; height: 17px; padding-left: 7px; background: linear-gradient(#f9f9f9, #efefef); border-bottom: 1px solid #dcdcdc; }
.bar.short { height: 16px; }
.bar button { width: 13px; height: 13px; flex: none; }
.g { display: grid; grid-auto-flow: column; grid-auto-columns: 1fr; justify-items: center; flex: none; }
.n2 { width: 26px; } .n3 { width: 38px; } .n4 { width: 51px; } .n5 { width: 64px; } .n6 { width: 76px; } .n7 { width: 89px; } .n16 { width: 203px; }
.g.n6 + .n16, .g.n16 + .n5 { margin-left: 10px; }
.far { margin-left: 18px; }
.mid { margin-left: 8px; }
.near { margin-left: 4px; }
.indent { margin-left: 13px; }
.bar .drop { width: 20px; gap: 2px; }
.on { background: #dcdfe4; outline: 1px solid #c6c9ce; outline-offset: -1px; }
.off { opacity: .6; }

main { flex: 1; min-height: 0; display: grid; grid-template-columns: 227px minmax(0, 301fr) minmax(0, 206fr); column-gap: 3px; }
.left { display: flex; flex-direction: column; min-height: 0; padding-right: 1px; border-right: 1px solid #ddd; }
.dock { display: flex; align-items: center; height: 9px; padding: 0 2px 0 1px; gap: 1px; }
.dock h2 { font-size: 5px; font-weight: 400; flex: 1; }
.dock svg { width: 5px; height: 5px; }
.tools { display: flex; align-items: center; height: 13px; padding-left: 1px; }
.tools button { width: 10px; }
.tools svg { width: 7px; height: 7px; }
.tools .sp { margin-left: 3px; }
.find { display: flex; align-items: center; gap: 3px; height: 8px; padding: 0 2px; background: #fff; border: 1px solid #ccc; }
.find svg { width: 5px; height: 5px; }
.find input { flex: 1; outline: 0; }
.algos { display: flex; height: 92px; background: #fff; border: 1px solid #d5d5d5; border-top: 0; }
.algos ul { flex: 1; }
.algos li { display: flex; align-items: center; gap: 2px; height: 10px; padding-left: 24px; }
.algos li svg { width: 9px; height: 9px; }
.algos .top { padding-left: 3px; }
.algos .top .tri { margin-right: 3px; }
.hit { background: #f0f0f0; }
.tri { display: block; width: 5px; height: 3px; flex: none; background: #444; clip-path: polygon(0 0, 100% 0, 50% 100%); }
.up { clip-path: polygon(50% 0, 100% 100%, 0 100%); }
.side { width: 3px; height: 5px; clip-path: polygon(0 0, 100% 50%, 0 100%); }
.scroll { width: 8px; display: flex; flex-direction: column; align-items: center; justify-content: space-between; padding: 3px 0; background: #fafafa; border-left: 1px solid #ddd; }
.track { width: 100%; flex: 1; margin-top: 16px; margin-bottom: 4px; background: #dedede; }
.tabs { display: flex; height: 12px; }
.tabs button { padding: 0 5px; height: 11px; background: #dadada; border: 1px solid #d2d2d2; border-width: 0 1px 1px 0; }
.tabs .cur { background: #fbfbfb; padding: 0 4px; }
.layers { flex: 1; display: flex; flex-direction: column; padding-top: 2px; }
.legend { flex: 1; background: #fff; border: 1px solid #ddd; font-weight: 700; }
.legend label { display: flex; align-items: center; gap: 2px; height: 10px; padding-left: 13px; }
.legend label:nth-child(n+3) { height: 9px; }
.legend label:nth-child(3) { height: 10px; }
input[type="checkbox"] { appearance: none; width: 7px; height: 8px; flex: none; background: #111; clip-path: polygon(0 55%, 18% 45%, 38% 70%, 85% 5%, 100% 12%, 42% 100%, 32% 100%); }
.dot { width: 5px; height: 5px; margin: 0 2px; border-radius: 50%; border: 1px solid #6668; }
.olive { background: #85714f; } .purple { background: #8052a8; }
.sq { width: 9px; height: 9px; border: 1px solid #0003; }
.red { background: #b82d3b; } .gold { background: #ddb33e; } .pink { background: #d9608c; }

.map { background: #b82d3b; margin-bottom: 1px; min-height: 0; }
.map svg { width: 100%; height: 100%; }

.right { display: flex; flex-direction: column; min-height: 0; border-left: 1px solid #ddd; }
.results { flex: 1; background: #fff; border: 1px solid #d8d8d8; border-width: 1px 0; min-height: 0; }
table { width: 100%; height: 233px; table-layout: fixed; border-collapse: collapse; font: 7px/8px "Open Sans", "Noto Sans", sans-serif; color: #333; }
th { font: 5px/8px Lato, sans-serif; text-align: left; height: 11px; background: #f7f7f7; border-bottom: 1px solid #ddd; padding-left: 1px; }
th + th { border-left: 1px solid #ddd; }
th:first-child { width: 97px; }
td { padding-left: 36px; }
td + td { padding-left: 2px; }
tbody tr:nth-child(even) { background: #ebe9e9; }
td .tri { display: inline-block; margin-right: 5px; vertical-align: middle; }
td .side { margin-right: 6px; }
.l0 { padding-left: 3px; font-weight: 700; color: #111; }
.l1 { padding-left: 15px; }
.l2 { padding-left: 27px; }
.tiny { font: 5px/8px "Open Sans", sans-serif; }
.opt { display: flex; align-items: center; height: 13px; padding: 0 3px 0 1px; }
.results + .opt { height: 17px; }
.opt label { width: 17px; }
.dim { color: #aaa; }
.pick { display: flex; align-items: center; height: 10px; padding-right: 5px; background: #fff; border: 1px solid #ddd; }
.pick select { flex: 1; appearance: none; padding-left: 2px; }
.pick.wide { flex: 1; }
.pick.narrow { width: 36px; background: #f4f4f4; }
.dim .tri { background: #aaa; }
.helpbtn { margin-left: auto; width: 18px; height: 10px; background: #fbfbfb; border: 1px solid #ccc; }

.status { display: flex; align-items: center; height: 14px; gap: 2px; padding: 0 2px; border-top: 1px solid #e4e4e4; }
.status > svg { width: 9px; height: 9px; }
.locate { width: 111px; }
.note { flex: 1; padding-left: 2px; }
input::placeholder { color: #999; opacity: 1; }
.coord { width: 39px; height: 9px; padding-left: 1px; background: #fff; border: 1px solid #ddd; }
.status .lock { width: 8px; margin: 0 1px; }
.scale { width: 40px; }
.spin { display: flex; align-items: center; width: 36px; height: 10px; background: #fff; border: 1px solid #ddd; padding: 0 2px; }
.spin input { flex: 1; width: 10px; }
.ud { display: grid; gap: 1px; }
.ud .tri { width: 4px; }
.render { display: flex; gap: 2px; align-items: center; margin: 0 2px; }
.status .last { margin-left: 4px; }

.taskbar { display: flex; align-items: center; height: 15px; background: #101112; color: #ddd; padding-right: 3px; gap: 6px; }
.apps { display: grid; grid-auto-flow: column; grid-auto-columns: 1fr; width: 245px; height: 15px; margin-right: auto; }
.apps svg { width: 9px; height: 9px; }
.run { border-bottom: 1px solid #c8c39a; background-clip: padding-box; margin: 0 2px; }
.act { background: #3c4a42; margin: 0; }
.taskbar > svg { width: 7px; height: 7px; }
.time { text-align: right; line-height: 6px; }
```
